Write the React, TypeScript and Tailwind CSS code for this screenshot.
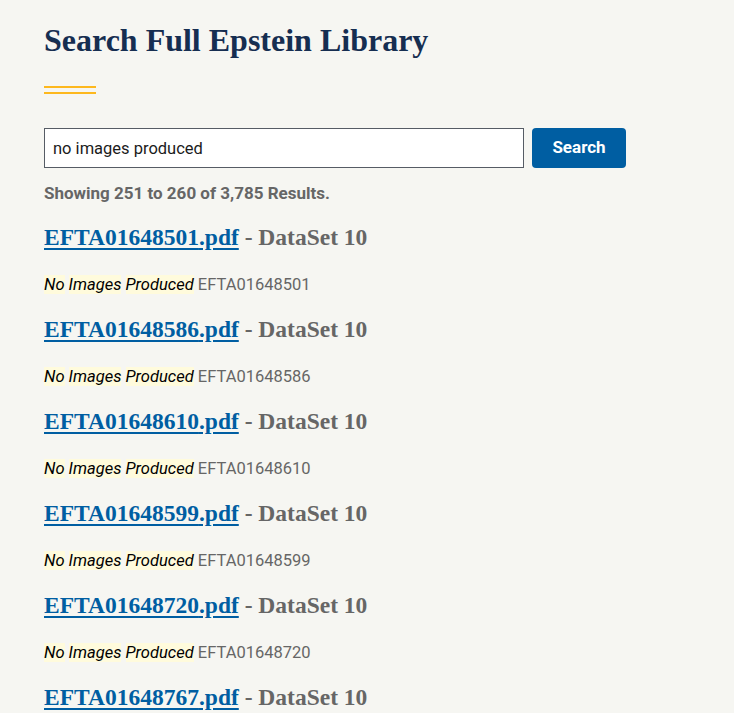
const results = ['EFTA01648501', 'EFTA01648586', 'EFTA01648610', 'EFTA01648599', 'EFTA01648720', 'EFTA01648767'];

const serif = "font-['Liberation_Serif',serif]";

function Result({ id }: { id: string }) {
  return (
    <div>
      <h3 className={`${serif} font-bold text-[23.5px] leading-[30px] text-[#666]`}>
        <a href="#" className="text-[#005ea2] underline decoration-2 underline-offset-[3px]">{id}.pdf</a>
        {' '}- DataSet 10
      </h3>
      <p className="mt-[21px] mb-[17px] text-[16.5px] leading-[24px] text-[#666]">
        <em className="text-black">
          <mark className="bg-[#fffbdc] text-black">No</mark>{' '}
          <mark className="bg-[#fffbdc] text-black">Images</mark>{' '}
          <mark className="bg-[#fffbdc] text-black">Produced</mark>
        </em>{' '}
        {id}
      </p>
    </div>
  );
}

export default function App() {
  return (
    <div className="min-h-screen bg-[#f6f6f2] font-['Roboto',sans-serif] px-11 pt-5">
      <h1 className={`${serif} font-bold text-[32px] leading-[40px] text-[#162e51]`}>Search Full Epstein Library</h1>
      <div className="mt-[26px] w-[52px] flex flex-col gap-1">
        <div className="h-[2px] bg-[#fdb81e]" />
        <div className="h-[2px] bg-[#fdb81e]" />
      </div>
      <form className="mt-[34px] flex gap-2" onSubmit={(e) => e.preventDefault()}>
        <input
          defaultValue="no images produced"
          className="w-[480px] h-10 border border-[#565c65] bg-white px-2 text-[16.5px] text-[#1b1b1b] outline-none"
        />
        <button className="w-[94px] h-10 rounded bg-[#005ea2] text-white font-bold text-[17px]">Search</button>
      </form>
      <p className="mt-[14px] text-[17px] leading-[22px] font-bold text-[#666]">Showing 251 to 260 of 3,785 Results.</p>
      <div className="mt-[18px]">
        {results.map((id) => <Result key={id} id={id} />)}
      </div>
    </div>
  );
}
